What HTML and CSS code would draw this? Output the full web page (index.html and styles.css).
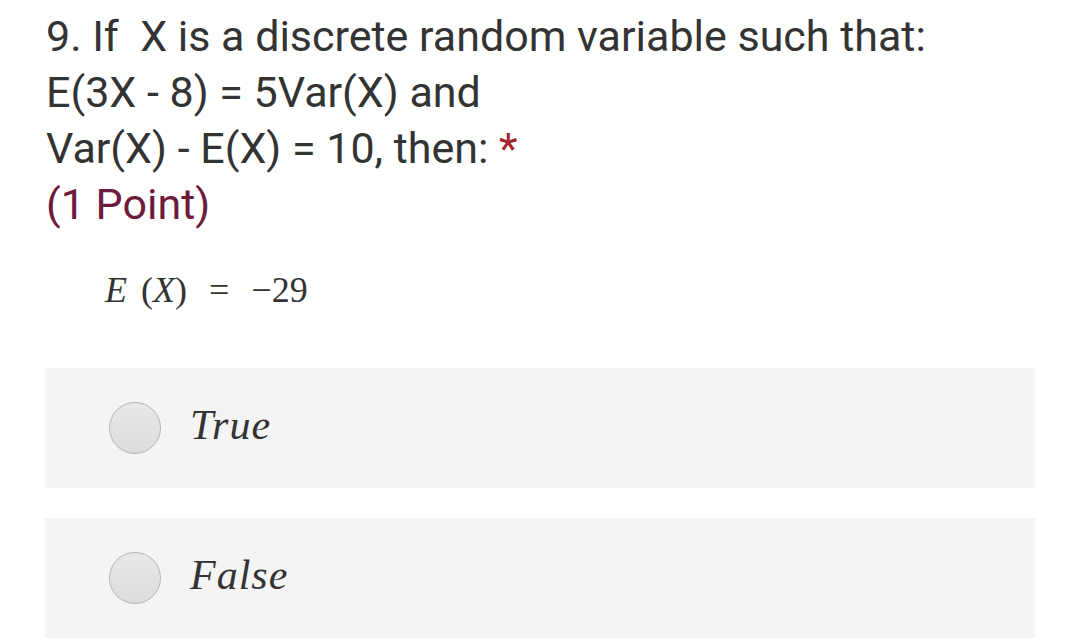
FILE: index.html
```html
<!DOCTYPE html>
<html>
<head>
<meta charset="utf-8">
<link rel="stylesheet" href="styles.css">
</head>
<body>
<div class="page">
  <div class="question">
    <div class="line">9. If&nbsp; X is a discrete random variable such that:</div>
    <div class="line">E(3X - 8) = 5Var(X) and</div>
    <div class="line">Var(X) - E(X) = 10, then: <span class="req">*</span></div>
    <div class="line points">(1 Point)</div>
  </div>
  <div class="formula"><i>E</i> <span class="paren">(</span><i>X</i><span class="paren">)</span> <span class="eq">=</span> <span class="minus">−</span>29</div>
  <div class="options">
    <div class="option">
      <span class="radio"></span>
      <span class="label">True</span>
    </div>
    <div class="option">
      <span class="radio"></span>
      <span class="label">False</span>
    </div>
  </div>
</div>
</body>
</html>
```
FILE: styles.css
```css
html, body {
  margin: 0;
  padding: 0;
  background: #ffffff;
}
.page {
  padding: 8px 45px 0 45px;
  width: 990px;
}
.question {
  font-family: Roboto, "Liberation Sans", sans-serif;
  font-size: 43px;
  color: #333333;
  line-height: 56px;
  padding-left: 1px;
}
.req {
  color: #a4262c;
}
.points {
  color: #6e1a3c;
}
.formula {
  font-family: "Liberation Serif", "Times New Roman", serif;
  font-size: 36px;
  color: #333333;
  padding: 29px 0 0 60px;
  height: 58px;
  line-height: 58px;
  word-spacing: 5px;
}
.formula .eq {
  padding: 0 8px;
}
.options {
  display: flex;
  flex-direction: column;
  gap: 30px;
  margin-top: 49px;
}
.option {
  background: #f4f4f4;
  height: 120px;
  display: flex;
  align-items: center;
  padding-left: 64px;
}
.radio {
  width: 50px;
  height: 50px;
  border-radius: 50%;
  border: 1px solid #b4b4b4;
  background: linear-gradient(#e9e9e9, #dcdcdc);
  flex: none;
}
.label {
  font-family: "Liberation Serif", "Times New Roman", serif;
  font-style: italic;
  font-size: 42px;
  color: #333333;
  margin-left: 29px;
  margin-bottom: 6px;
  letter-spacing: 1px;
}
```
